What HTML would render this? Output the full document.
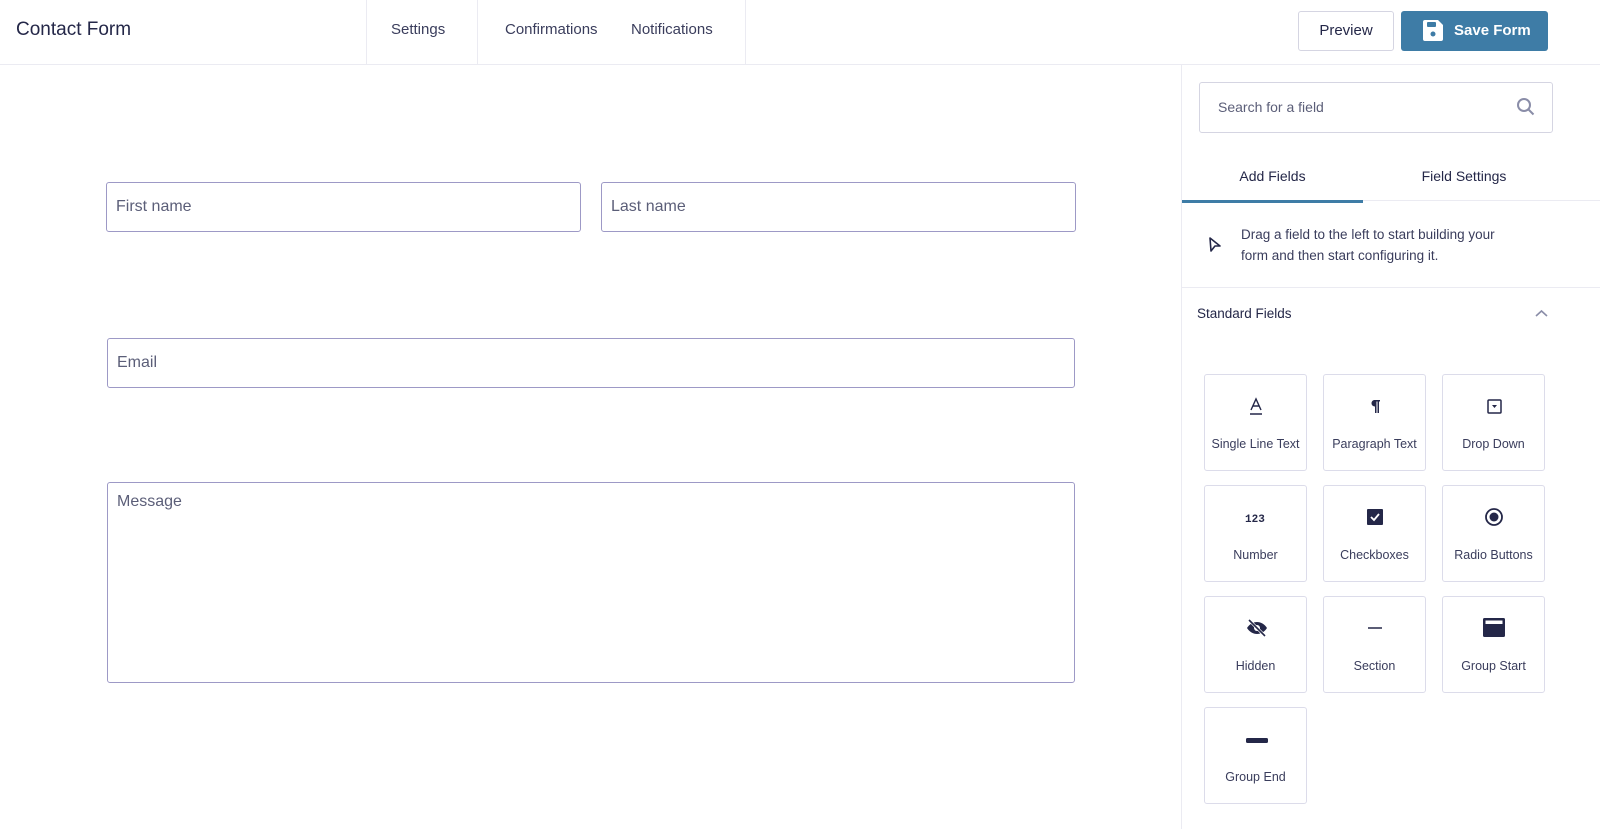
<!DOCTYPE html>
<html><head><meta charset="utf-8"><style>
*{box-sizing:border-box;margin:0;padding:0}
body{width:1600px;height:829px;overflow:hidden;background:#fff;font-family:"Liberation Sans",sans-serif;color:#242748;position:relative}
.hdr{position:absolute;left:0;top:0;width:1600px;height:65px;border-bottom:1px solid #ebebf2}
.abs{position:absolute}
.sep{position:absolute;top:0;width:1px;height:64px;background:#ebebf2}
.nav{position:absolute;top:21px;font-size:15px;color:#3a3d5c}
.inp{position:absolute;border:1px solid #9d99c6;border-radius:3px;font-size:16px;color:#5b5e78;padding-left:9px}
.card{position:absolute;width:103px;height:97px;border:1px solid #dcdcea;border-radius:3px;text-align:center}
.card .lb{position:absolute;left:0;right:0;top:62px;font-size:12.5px;color:#3a3d5c}
.card svg{position:absolute;left:41px;top:21px}
</style></head><body>
<div class="hdr">
<div class="abs" style="left:16px;top:19px;font-size:19px;color:#242748">Contact Form</div>
<div class="sep" style="left:366px"></div><div class="sep" style="left:477px"></div><div class="sep" style="left:745px"></div>
<div class="nav" style="left:391px">Settings</div>
<div class="nav" style="left:505px">Confirmations</div>
<div class="nav" style="left:631px">Notifications</div>
<div class="abs" style="left:1298px;top:11px;width:96px;height:40px;border:1px solid #d5d5e2;border-radius:3px;font-size:15px;text-align:center;line-height:38px">Preview</div>
<div class="abs" style="left:1401px;top:11px;width:147px;height:40px;background:#3e7ca6;border-radius:3px;color:#fff;font-size:15px;font-weight:bold;line-height:40px;padding-left:53px">Save Form</div>
<svg class="abs" style="left:1423px;top:20px" width="20" height="21" viewBox="0 0 20 21"><path d="M2 0h13l5 5v14a2 2 0 0 1-2 2H2a2 2 0 0 1-2-2V2a2 2 0 0 1 2-2z" fill="#fff"/><rect x="4" y="2" width="9" height="5" rx="1" fill="#3e7ca6"/><circle cx="10" cy="14" r="2.5" fill="#3e7ca6"/></svg>
</div>
<div class="inp" style="left:106px;top:182px;width:475px;height:50px;line-height:48px">First name</div>
<div class="inp" style="left:601px;top:182px;width:475px;height:50px;line-height:48px">Last name</div>
<div class="inp" style="left:107px;top:338px;width:968px;height:50px;line-height:48px">Email</div>
<div class="inp" style="left:107px;top:482px;width:968px;height:201px;padding-top:10px">Message</div>
<div class="abs" style="left:1181px;top:65px;width:1px;height:764px;background:#ebebf2"></div>
<div class="abs" style="left:1199px;top:82px;width:354px;height:51px;border:1px solid #d5d5e2;border-radius:3px;font-size:14px;color:#5b5e78;padding-left:18px;line-height:49px">Search for a field</div>
<svg class="abs" style="left:1516px;top:97px" width="20" height="20" viewBox="0 0 20 20"><circle cx="8" cy="8" r="6" fill="none" stroke="#8a8da8" stroke-width="2"/><path d="M12.5 12.5l5 5" stroke="#8a8da8" stroke-width="2"/></svg>
<div class="abs" style="left:1182px;top:168px;width:181px;text-align:center;font-size:14px;color:#242748">Add Fields</div>
<div class="abs" style="left:1363px;top:168px;width:202px;text-align:center;font-size:14px;color:#242748">Field Settings</div>
<div class="abs" style="left:1182px;top:200px;width:418px;height:1px;background:#ebebf2"></div>
<div class="abs" style="left:1182px;top:200px;width:181px;height:3px;background:#3e7ca6"></div>
<svg class="abs" style="left:1208px;top:236px" width="14" height="17" viewBox="0 0 14 17"><path d="M2 2l10 8H7l-4 5z" fill="none" stroke="#242748" stroke-width="1.6" stroke-linejoin="round"/></svg>
<div class="abs" style="left:1241px;top:224px;font-size:13.5px;line-height:21px;color:#3a3d5c;width:330px">Drag a field to the left to start building your<br>form and then start configuring it.</div>
<div class="abs" style="left:1182px;top:287px;width:418px;height:1px;background:#ebebf2"></div>
<div class="abs" style="left:1197px;top:306px;font-size:13.5px;color:#242748">Standard Fields</div>
<svg class="abs" style="left:1535px;top:309px" width="13" height="9" viewBox="0 0 13 9"><path d="M1 7l5.5-5 5.5 5" fill="none" stroke="#8a8da8" stroke-width="1.6"/></svg>

<div class="card" style="left:1204px;top:374px"><svg width="20" height="20" viewBox="0 0 20 20"><path d="M5 14L10 3l5 11M7 10h6M4 18h12" fill="none" stroke="#242748" stroke-width="1.4"/></svg><div class="lb">Single Line Text</div></div>
<div class="card" style="left:1323px;top:374px"><svg width="20" height="20" viewBox="0 0 20 20"><path d="M9 4h6v1.5h-1V17h-1.5V5.5h-1V17H10v-6.5a3.3 3.3 0 0 1-1-6.5z" fill="#242748"/></svg><div class="lb">Paragraph Text</div></div>
<div class="card" style="left:1442px;top:374px"><svg width="20" height="20" viewBox="0 0 20 20"><rect x="4" y="4" width="13" height="13" rx="1" fill="none" stroke="#242748" stroke-width="1.5"/><path d="M8 9h5l-2.5 3z" fill="#242748"/></svg><div class="lb">Drop Down</div></div>
<div class="card" style="left:1204px;top:485px"><svg width="22" height="20" viewBox="0 0 22 20" style="left:40px"><text x="0" y="15" font-size="11" font-weight="bold" font-family="Liberation Mono" fill="#242748">123</text></svg><div class="lb">Number</div></div>
<div class="card" style="left:1323px;top:485px"><svg width="20" height="20" viewBox="0 0 20 20"><rect x="2" y="2" width="16" height="16" rx="1" fill="#242748"/><path d="M6 10l3 3 5-6" fill="none" stroke="#fff" stroke-width="1.8"/></svg><div class="lb">Checkboxes</div></div>
<div class="card" style="left:1442px;top:485px"><svg width="20" height="20" viewBox="0 0 20 20"><circle cx="10" cy="10" r="8" fill="none" stroke="#242748" stroke-width="1.8"/><circle cx="10" cy="10" r="4.5" fill="#242748"/></svg><div class="lb">Radio Buttons</div></div>
<div class="card" style="left:1204px;top:596px"><svg width="22" height="20" viewBox="0 0 22 20"><path d="M1 10c5-8 15-8 20 0-5 8-15 8-20 0z" fill="#242748"/><circle cx="11" cy="10" r="3" fill="#fff"/><path d="M3 2l16 16" stroke="#fff" stroke-width="3"/><path d="M3 2l16 16" stroke="#242748" stroke-width="1.6"/></svg><div class="lb">Hidden</div></div>
<div class="card" style="left:1323px;top:596px"><svg width="20" height="20" viewBox="0 0 20 20"><path d="M3 10h14" stroke="#242748" stroke-width="1.5"/></svg><div class="lb">Section</div></div>
<div class="card" style="left:1442px;top:596px"><svg width="24" height="20" viewBox="0 0 24 20" style="left:39px"><rect x="1" y="0" width="22" height="19" rx="1.5" fill="#242748"/><rect x="3.5" y="2.5" width="17" height="3.5" fill="#fff"/></svg><div class="lb">Group Start</div></div>
<div class="card" style="left:1204px;top:707px"><svg width="24" height="20" viewBox="0 0 24 20" style="left:40px"><rect x="1" y="9" width="22" height="5" rx="1.5" fill="#242748"/></svg><div class="lb">Group End</div></div>
</body></html>
